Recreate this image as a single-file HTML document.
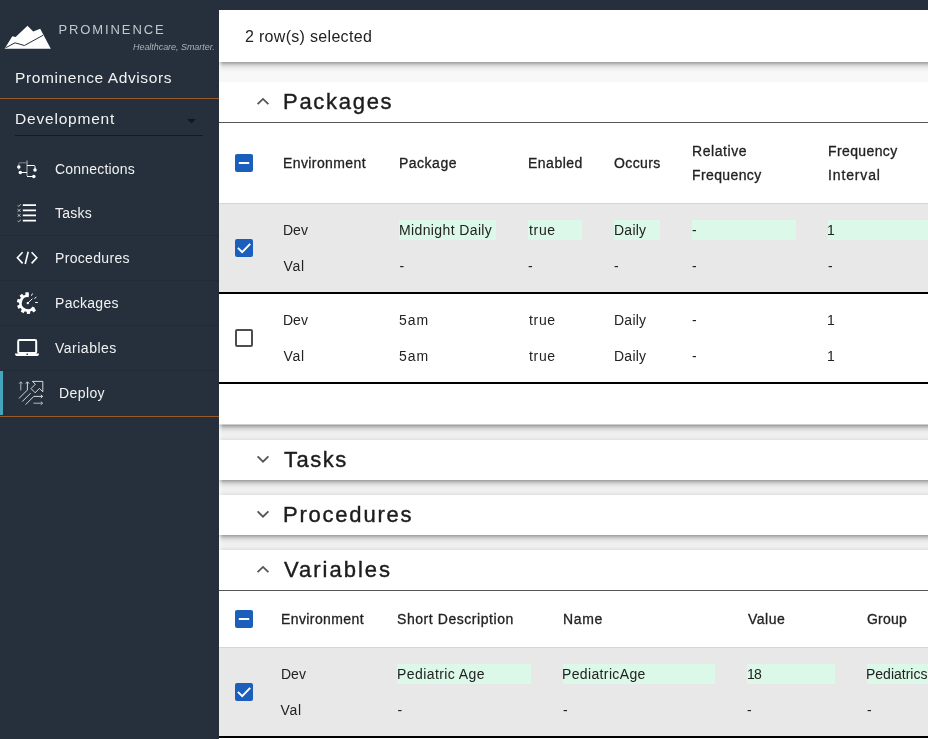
<!DOCTYPE html>
<html><head><meta charset="utf-8"><title>Deploy</title>
<style>
*{box-sizing:border-box;margin:0;padding:0}
html,body{width:928px;height:739px;overflow:hidden;background:#f8f8f8;font-family:"Liberation Sans",sans-serif;color:#1f1f1f}
#side{will-change:transform;position:absolute;left:0;top:0;width:219px;height:739px;background:#25303c;color:#f2f2f2;z-index:5}
#main{will-change:transform;width:709px;position:absolute;left:219px;top:0;height:739px}
#topbar{position:absolute;left:0;top:0;width:100%;height:10px;background:#25303c;z-index:4}
#tool{position:absolute;left:0;top:10px;width:100%;height:52px;background:#fff;z-index:3}
#tool span{position:absolute;left:26px;top:17px;font-size:16px;line-height:20px;color:#222;white-space:nowrap}
.panel{position:absolute;left:0;width:100%;background:#fff;overflow:hidden}
.ph{position:relative;height:40px}
.ph svg{position:absolute;left:32px;top:7.4px}
.ph h2{position:absolute;left:64px;top:5px;font-size:22px;line-height:30px;font-weight:400;color:#1c1c1c;white-space:nowrap;-webkit-text-stroke:.4px #1c1c1c}
.line{height:1px;background:#555}
.row{position:relative;width:100%}
.hdr{border-bottom:1px solid #d6d6d6}
.cell{position:absolute;font-size:14px;line-height:24px;white-space:nowrap;color:#222}
.hdr .cell{-webkit-text-stroke:.3px #222}
.sel{background:#e8e8e8}
.drow{height:90px;border-bottom:2px solid #000}
.hl{position:absolute;height:20px;top:16px;background:#dcf8e8}
.cb{position:absolute;left:16px;width:18px;height:18px;border-radius:2px;background:#1a5fbb}
.cb.off{background:transparent;border:2px solid #4d4d4d}
.cb svg{position:absolute;left:0;top:0}
/* sidebar */
.brand{position:absolute;left:58.5px;top:22px;font-size:13px;line-height:16px;color:#c3c8cd;white-space:nowrap}
.tag{position:absolute;left:133px;top:41px;font-size:9px;line-height:12px;font-style:italic;color:#aab0b7;white-space:nowrap}
.org{position:absolute;left:15px;top:68px;font-size:15.5px;line-height:20px;white-space:nowrap}
.oline{position:absolute;left:0;width:219px;height:1px;background:#9a5b2a}
.env{position:absolute;left:15px;top:109px;font-size:15.5px;line-height:20px;white-space:nowrap}
.nav{position:absolute;left:0;width:219px;height:45px;border-top:1px solid #212a36}
.nav span{position:absolute;left:55px;top:13px;font-size:14px;line-height:18px;white-space:nowrap}
.nav svg{position:absolute}

.gap{position:absolute;left:0;width:100%}
.gap::before{content:"";position:absolute;left:0;top:0;width:4px;height:100%;background:linear-gradient(to right,rgba(248,248,248,.75),rgba(248,248,248,0))}
.g20{top:62px;height:20px;background:linear-gradient(to bottom,rgb(166,166,166) 0.5px,rgb(181,181,181) 1.5px,rgb(200,200,200) 2.5px,rgb(214,214,214) 3.5px,rgb(224,224,224) 4.5px,rgb(232,232,232) 5.5px,rgb(237,237,237) 6.5px,rgb(241,241,241) 7.5px,rgb(244,244,244) 8.5px,rgb(246,246,246) 9.5px,rgb(247,247,247) 10.5px,rgb(248,248,248) 11.5px,rgb(248,248,248) 12.5px,rgb(248,248,248) 13.5px,rgb(248,248,248) 14.5px,rgb(248,248,248) 15.5px,rgb(248,248,248) 16.5px,rgb(248,248,248) 17.5px,rgb(248,248,248) 18.5px,rgb(248,248,248) 19.5px)}
.g16{top:424px;height:16px;background:linear-gradient(to bottom,rgb(205,205,205) 0.5px,rgb(164,164,164) 1.5px,rgb(181,181,181) 2.5px,rgb(198,198,198) 3.5px,rgb(211,211,211) 4.5px,rgb(221,221,221) 5.5px,rgb(228,228,228) 6.5px,rgb(233,233,233) 7.5px,rgb(237,237,237) 8.5px,rgb(239,239,239) 9.5px,rgb(240,240,240) 10.5px,rgb(240,240,240) 11.5px,rgb(239,239,239) 12.5px,rgb(236,236,236) 13.5px,rgb(232,232,232) 14.5px,rgb(227,227,227) 15.5px)}
.g15{height:15px;background:linear-gradient(to bottom,rgb(164,164,164) 0.5px,rgb(181,181,181) 1.5px,rgb(198,198,198) 2.5px,rgb(211,211,211) 3.5px,rgb(221,221,221) 4.5px,rgb(228,228,228) 5.5px,rgb(233,233,233) 6.5px,rgb(237,237,237) 7.5px,rgb(239,239,239) 8.5px,rgb(240,240,240) 9.5px,rgb(240,240,240) 10.5px,rgb(239,239,239) 11.5px,rgb(236,236,236) 12.5px,rgb(232,232,232) 13.5px,rgb(227,227,227) 14.5px)}
#a_dev{letter-spacing:0.00px;margin-left:0.00px}
#a_en{letter-spacing:0.67px;margin-left:1.00px}
#a_oc{letter-spacing:0.25px;margin-left:0.00px}
#a_one{letter-spacing:0.00px;margin-left:-1.00px}
#a_pkg{letter-spacing:0.38px;margin-left:0.00px}
#a_val{letter-spacing:0.80px;margin-left:0.40px}
#b_dev{letter-spacing:0.00px;margin-left:0.00px}
#b_en{letter-spacing:0.67px;margin-left:1.00px}
#b_oc{letter-spacing:0.25px;margin-left:0.00px}
#b_one{letter-spacing:0.00px;margin-left:-1.00px}
#b_pkg{letter-spacing:1.00px;margin-left:0.00px}
#b_val{letter-spacing:0.80px;margin-left:0.40px}
#brand{letter-spacing:1.89px;margin-left:0.00px}
#c_en{letter-spacing:0.67px;margin-left:1.00px}
#c_oc{letter-spacing:0.25px;margin-left:0.00px}
#c_one{letter-spacing:0.00px;margin-left:-1.00px}
#c_pkg{letter-spacing:1.00px;margin-left:0.00px}
#d_dev{letter-spacing:0.00px;margin-left:0.00px}
#d_grp{letter-spacing:0.00px;margin-left:-1.00px}
#d_name{letter-spacing:0.36px;margin-left:-1.00px}
#d_sd{letter-spacing:0.42px;margin-left:0.00px}
#d_val{letter-spacing:0.70px;margin-left:-0.40px}
#d_val18{letter-spacing:-0.80px;margin-left:0.00px}
#env{letter-spacing:0.80px;margin-left:0.00px}
#h1{letter-spacing:1.71px;margin-left:0.00px}
#h2{letter-spacing:1.50px;margin-left:1.00px}
#h3{letter-spacing:1.78px;margin-left:0.00px}
#h4{letter-spacing:2.00px;margin-left:1.00px}
#n1{letter-spacing:0.20px;margin-left:0.00px}
#n2{letter-spacing:0.25px;margin-left:0.00px}
#n3{letter-spacing:0.33px;margin-left:0.00px}
#n4{letter-spacing:0.29px;margin-left:0.00px}
#n5{letter-spacing:0.50px;margin-left:0.00px}
#n6{letter-spacing:0.40px;margin-left:0.00px}
#org{letter-spacing:0.60px;margin-left:0.00px}
#p_en{letter-spacing:0.50px;margin-left:0.00px}
#p_env{letter-spacing:0.40px;margin-left:0.00px}
#p_fr{letter-spacing:0.38px;margin-left:0.00px}
#p_int{letter-spacing:0.86px;margin-left:0.00px}
#p_oc{letter-spacing:0.40px;margin-left:0.00px}
#p_pkg{letter-spacing:0.50px;margin-left:0.00px}
#p_rel{letter-spacing:0.57px;margin-left:0.00px}
#p_rf{letter-spacing:0.38px;margin-left:0.00px}
#tag{letter-spacing:-0.05px;margin-left:0.00px}
#tool_t{letter-spacing:0.31px;margin-left:0.00px}
#v_env{letter-spacing:0.40px;margin-left:0.00px}
#v_group{letter-spacing:0.20px;margin-left:0.00px}
#v_name{letter-spacing:0.67px;margin-left:0.00px}
#v_sd{letter-spacing:0.56px;margin-left:0.00px}
#v_value{letter-spacing:0.50px;margin-left:1.00px}
</style></head><body>
<div id="side">
 <svg style="position:absolute;left:0;top:14px" width="60" height="40" viewBox="0 0 60 40">
  <path d="M4.6 34.8 L12.3 22.2 L15.6 23 L27.5 11.8 L33.2 17.6 L40.2 14.8 L50.8 34.8 Z" fill="#fff"/>
  <path d="M5.6 33.8 L15 28.8 L24.4 31.5 L43.2 21.2" fill="none" stroke="#25303c" stroke-width="1"/>
 </svg>
 <div class="brand t" id="brand">PROMINENCE</div>
 <div class="tag t" id="tag">Healthcare, Smarter.</div>
 <div class="org t" id="org">Prominence Advisors</div>
 <div class="oline" style="top:98px"></div>
 <div class="env t" id="env">Development</div>
 <svg style="position:absolute;left:186px;top:118px" width="12" height="7" viewBox="0 0 12 7"><path d="M1 1 L10 1 L5.5 5.5 Z" fill="#14181e"/></svg>
 <div style="position:absolute;left:15px;top:135px;width:188px;height:1px;background:#141a22"></div>

 <div class="nav" style="top:147px;border-top:none">
  <svg style="left:14px;top:13px" width="28" height="24" viewBox="0 0 28 24" fill="none" stroke="#fff" stroke-width="1">
   <path d="M13 .5 V16" stroke="#8c939c" stroke-width="1.4"/>
   <path d="M4.8 10 V3.8 Q4.8 2.8 5.8 2.8 H13" stroke="#7f8791"/>
   <path d="M13 5.5 H20 Q21 5.5 21 6.5 V9.5"/>
   <path d="M6.3 12.5 H13"/>
   <path d="M13 16.5 H19.8"/>
   <circle cx="4.8" cy="7" r="1.75" fill="#fff" stroke="none"/>
   <circle cx="6.3" cy="12.5" r="1.75" fill="#fff" stroke="none"/>
   <circle cx="21" cy="9.9" r="1.75" fill="#fff" stroke="none"/>
   <circle cx="19.8" cy="16.5" r="1.75" fill="#fff" stroke="none"/>
  </svg>
  <span class="t" id="n1">Connections</span></div>
 <div class="nav" style="top:190px;border-top-color:#25303c">
  <svg style="left:14px;top:10px" width="28" height="24" viewBox="0 0 28 24" fill="none" stroke="#fff">
   <path d="M8.8 4.2 H22 M8.8 9.3 H22 M8.8 14.3 H22 M8.8 19.6 H22" stroke-width="1.7"/>
   <path d="M3.6 4.4 L4.8 5.3 L7 3.2 M3.6 19.8 L4.8 20.7 L7 18.6 M3.6 8.3 L6.6 10.6 M6.6 8.3 L3.6 10.6 M3.6 13.3 L6.6 15.6 M6.6 13.3 L3.6 15.6" stroke-width=".8" stroke="#d8dbde"/>
  </svg>
  <span class="t" id="n2">Tasks</span></div>
 <div class="nav" style="top:235px">
  <svg style="left:14px;top:10px" width="28" height="24" viewBox="0 0 28 24" fill="none" stroke="#fff" stroke-width="1.6">
   <path d="M8.6 6.3 L3.4 11.8 L8.6 17.4 M14.2 5.8 L11.2 18 M17.6 6.3 L22.8 11.8 L17.6 17.4"/>
  </svg>
  <span class="t" id="n3">Procedures</span></div>
 <div class="nav" style="top:280px">
  <svg style="left:14px;top:9px" width="28" height="26" viewBox="0 0 28 26">
   <g transform="translate(13.8,13.1)">
    <path fill="#fff" d="M4.95 3.39 L7.18 4.92 L6.86 5.36 L8.23 7.30 L5.80 9.34 L4.12 7.66 L2.92 8.20 L2.40 8.36 L2.36 10.74 L-0.80 10.97 L-1.17 8.62 L-2.46 8.35 L-2.98 8.18 L-4.40 10.08 L-7.09 8.41 L-6.02 6.28 L-6.89 5.31 L-7.21 4.86 L-9.49 5.57 L-10.68 2.63 L-8.56 1.55 L-8.70 0.24 L-8.69 -0.30 L-10.95 -1.07 L-10.19 -4.15 L-7.84 -3.78 L-7.18 -4.92 L-6.86 -5.36 L-8.23 -7.30 L-5.80 -9.34 L-4.12 -7.66 L-2.92 -8.20 L-2.40 -8.36 L-2.36 -10.74 L0.80 -10.97 L1.17 -8.62 L0.81 -5.95 A6.0 6.0 0 1 0 4.95 3.39 Z"/>
    <circle r="1.2" fill="#fff"/>
    <path d="M0 0 L4.6 -4.4" stroke="#fff" stroke-width=".9"/>
    <path d="M3.6 -7.4 L4.7 -9.6 M6.6 -4.6 L8.6 -6 M7.4 -.6 H10" stroke="#fff" stroke-width="1"/>
   </g>
  </svg>
  <span class="t" id="n4">Packages</span></div>
 <div class="nav" style="top:325px">
  <svg style="left:14px;top:10px" width="28" height="24" viewBox="0 0 28 24" fill="none">
   <rect x="4.2" y="4" width="18" height="13" rx="1.2" stroke="#fff" stroke-width="2"/>
   <path d="M1 17.4 H25 Q25 20 22.4 20 H3.6 Q1 20 1 17.4 Z" fill="#fff"/>
   <rect x="12.4" y="17.6" width="1.6" height="1.3" fill="#25303c"/>
  </svg>
  <span class="t" id="n5">Variables</span></div>
 <div class="nav" style="top:370px">
  <div style="position:absolute;left:0;top:0;width:3px;height:44px;background:#44a5bd"></div>
  <svg style="left:16px;top:8px" width="30" height="28" viewBox="0 0 30 28" fill="none" stroke="#e8eaec" stroke-width=".9">
   <path d="M4.8 11.4 V3 M3.2 4.6 L4.8 2.8 L6.4 4.6" stroke="#c3c7cc"/>
   <path d="M11.4 3 V11 L3 19.4 M9.8 4.6 L11.4 2.8 L13 4.6"/>
   <path d="M6.2 22.6 L14.6 14.2"/>
   <path d="M9.6 25.6 L17.8 17.4 H26.4 M24.8 15.8 L26.6 17.4 L24.8 19"/>
   <path d="M17.4 24.2 H26.4 M24.8 22.6 L26.6 24.2 L24.8 25.8" stroke="#c3c7cc"/>
   <path d="M16.4 2.4 H26.8 V12.8 L23.4 9.4 L19.2 13.8 L15 9.6 L19.4 5.2 Z"/>
  </svg>
  <span class="t" id="n6" style="left:59px">Deploy</span></div>
 <div class="oline" style="top:416px"></div>
</div>
<div id="main">
<div id="topbar"></div>
<div id="tool"><span class="t" id="tool_t">2 row(s) selected</span></div>

<div class="gap g20"></div><div class="gap g16"></div><div class="gap g15" style="top:480px"></div><div class="gap g15" style="top:535px"></div>
<!-- Packages -->
<div class="panel" style="top:82px;height:342px">
 <div class="ph"><svg width="24" height="24" viewBox="0 0 24 24"><path d="M6.6 15.2 L12 9.9 L17.4 15.2" fill="none" stroke="#555" stroke-width="1.8"/></svg><h2 class="t" id="h1">Packages</h2></div>
 <div class="line"></div>
 <div class="row hdr" style="height:81px">
  <div class="cb" style="top:31px"><svg width="18" height="18"><rect x="3.8" y="8" width="10.4" height="2" fill="#fff"/></svg></div>
  <div class="cell t" id="p_env" style="left:64px;top:28px">Environment</div>
  <div class="cell t" id="p_pkg" style="left:180px;top:28px">Package</div>
  <div class="cell t" id="p_en" style="left:309px;top:28px">Enabled</div>
  <div class="cell t" id="p_oc" style="left:395px;top:28px">Occurs</div>
  <div class="cell t" id="p_rel" style="left:473px;top:16px">Relative</div>
  <div class="cell t" id="p_rf" style="left:473px;top:40px">Frequency</div>
  <div class="cell t" id="p_fr" style="left:609px;top:16px">Frequency</div>
  <div class="cell t" id="p_int" style="left:609px;top:40px">Interval</div>
 </div>
 <div class="row drow sel">
  <div class="cb" style="top:35px"><svg width="18" height="18"><path d="M2.9 8.9 L7.2 13.1 L15.2 4.9" fill="none" stroke="#fff" stroke-width="2"/></svg></div>
  <div class="hl" style="left:180px;width:97px"></div>
  <div class="hl" style="left:309px;width:54px"></div>
  <div class="hl" style="left:395px;width:46px"></div>
  <div class="hl" style="left:473px;width:104px"></div>
  <div class="hl" style="left:609px;width:104px"></div>
  <div class="cell t" id="a_dev" style="left:64px;top:14px">Dev</div>
  <div class="cell t" id="a_pkg" style="left:180px;top:14px">Midnight Daily</div>
  <div class="cell t" id="a_en" style="left:309px;top:14px">true</div>
  <div class="cell t" id="a_oc" style="left:395px;top:14px">Daily</div>
  <div class="cell" style="left:473px;top:14px">-</div>
  <div class="cell t" id="a_one" style="left:609px;top:14px">1</div>
  <div class="cell t" id="a_val" style="left:64px;top:50px">Val</div>
  <div class="cell" style="left:180.5px;top:50px">-</div>
  <div class="cell" style="left:309px;top:50px">-</div>
  <div class="cell" style="left:395px;top:50px">-</div>
  <div class="cell" style="left:473px;top:50px">-</div>
  <div class="cell" style="left:609px;top:50px">-</div>
 </div>
 <div class="row drow">
  <div class="cb off" style="top:35px"></div>
  <div class="cell t" id="b_dev" style="left:64px;top:14px">Dev</div>
  <div class="cell t" id="b_pkg" style="left:180px;top:14px">5am</div>
  <div class="cell t" id="b_en" style="left:309px;top:14px">true</div>
  <div class="cell t" id="b_oc" style="left:395px;top:14px">Daily</div>
  <div class="cell" style="left:473px;top:14px">-</div>
  <div class="cell t" id="b_one" style="left:609px;top:14px">1</div>
  <div class="cell t" id="b_val" style="left:64px;top:50px">Val</div>
  <div class="cell t" id="c_pkg" style="left:180px;top:50px">5am</div>
  <div class="cell t" id="c_en" style="left:309px;top:50px">true</div>
  <div class="cell t" id="c_oc" style="left:395px;top:50px">Daily</div>
  <div class="cell" style="left:473px;top:50px">-</div>
  <div class="cell t" id="c_one" style="left:609px;top:50px">1</div>
 </div>
</div>

<!-- Tasks -->
<div class="panel" style="top:440px;height:40px">
 <div class="ph"><svg width="24" height="24" viewBox="0 0 24 24"><path d="M6.6 9.4 L12 14.7 L17.4 9.4" fill="none" stroke="#555" stroke-width="1.8"/></svg><h2 class="t" id="h2">Tasks</h2></div>
</div>
<!-- Procedures -->
<div class="panel" style="top:495px;height:40px">
 <div class="ph"><svg width="24" height="24" viewBox="0 0 24 24"><path d="M6.6 9.4 L12 14.7 L17.4 9.4" fill="none" stroke="#555" stroke-width="1.8"/></svg><h2 class="t" id="h3">Procedures</h2></div>
</div>
<!-- Variables -->
<div class="panel" style="top:550px;height:300px">
 <div class="ph"><svg width="24" height="24" viewBox="0 0 24 24"><path d="M6.6 15.2 L12 9.9 L17.4 15.2" fill="none" stroke="#555" stroke-width="1.8"/></svg><h2 class="t" id="h4">Variables</h2></div>
 <div class="line"></div>
 <div class="row hdr" style="height:57px">
  <div class="cb" style="top:19px"><svg width="18" height="18"><rect x="3.8" y="8" width="10.4" height="2" fill="#fff"/></svg></div>
  <div class="cell t" id="v_env" style="left:62px;top:16px">Environment</div>
  <div class="cell t" id="v_sd" style="left:178px;top:16px">Short Description</div>
  <div class="cell t" id="v_name" style="left:344px;top:16px">Name</div>
  <div class="cell t" id="v_value" style="left:528px;top:16px">Value</div>
  <div class="cell t" id="v_group" style="left:648px;top:16px">Group</div>
 </div>
 <div class="row drow sel">
  <div class="cb" style="top:35px"><svg width="18" height="18"><path d="M2.9 8.9 L7.2 13.1 L15.2 4.9" fill="none" stroke="#fff" stroke-width="2"/></svg></div>
  <div class="hl" style="left:178px;width:134px"></div>
  <div class="hl" style="left:344px;width:152px"></div>
  <div class="hl" style="left:528px;width:88px"></div>
  <div class="hl" style="left:648px;width:100px"></div>
  <div class="cell t" id="d_dev" style="left:62px;top:14px">Dev</div>
  <div class="cell t" id="d_sd" style="left:178px;top:14px">Pediatric Age</div>
  <div class="cell t" id="d_name" style="left:344px;top:14px">PediatricAge</div>
  <div class="cell t" id="d_val18" style="left:528px;top:14px">18</div>
  <div class="cell t" id="d_grp" style="left:648px;top:14px">Pediatrics</div>
  <div class="cell t" id="d_val" style="left:62px;top:50px">Val</div>
  <div class="cell" style="left:178.5px;top:50px">-</div>
  <div class="cell" style="left:344px;top:50px">-</div>
  <div class="cell" style="left:528px;top:50px">-</div>
  <div class="cell" style="left:648px;top:50px">-</div>
 </div>
</div>
</div>
</body></html>
